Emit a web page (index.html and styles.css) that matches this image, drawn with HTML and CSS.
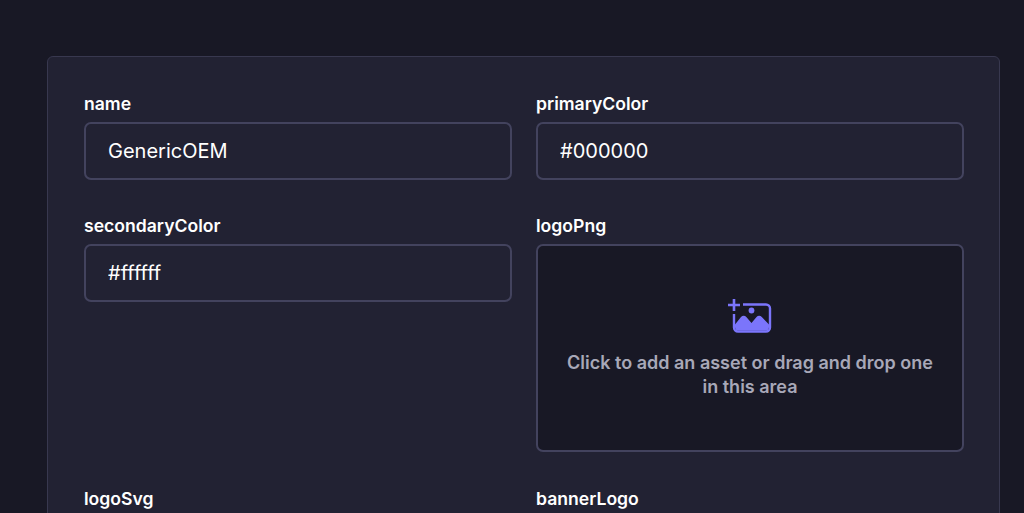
FILE: index.html
```html
<!DOCTYPE html>
<html lang="en">
<head>
    <meta charset="UTF-8">
    <title>Branding</title>
    <link rel="stylesheet" href="styles.css">
</head>
<body>
    <div class="card">
        <div class="field">
            <label class="field-label">name</label>
            <input class="text-input" type="text" value="GenericOEM">
        </div>
        <div class="field">
            <label class="field-label">primaryColor</label>
            <input class="text-input" type="text" value="#000000">
        </div>
        <div class="field">
            <label class="field-label">secondaryColor</label>
            <input class="text-input" type="text" value="#ffffff">
        </div>
        <div class="field">
            <label class="field-label">logoPng</label>
            <div class="dropzone">
                <svg class="dropzone-icon" width="44" height="36" viewBox="0 0 44 36">
                    <path d="M0 8h12M6 2v12" stroke="#7b75fb" stroke-width="2.6" fill="none"/>
                    <path d="M15 7.500h23a4 4 0 0 1 4 4v19a4 4 0 0 1-4 4H10a4 4 0 0 1-4-4V17" stroke="#7b75fb" stroke-width="2.4" fill="none"/>
                    <circle cx="23.500" cy="13.500" r="2.900" fill="#7b75fb"/>
                    <path d="M7 30V27.500L13 20c1.500-1.800 3.800-1.800 5.300 0l5.200 6 5-6c1.500-1.800 3.800-1.800 5.300 0L41 27.500V30a3.500 3.500 0 0 1-3.500 3.500H10.500A3.500 3.500 0 0 1 7 30z" fill="#7b75fb"/>
                </svg>
                <p class="dropzone-text">Click to add an asset or drag and drop one in this area</p>
            </div>
        </div>
        <div class="field field-next">
            <label class="field-label">logoSvg</label>
        </div>
        <div class="field field-next">
            <label class="field-label">bannerLogo</label>
        </div>
    </div>
</body>
</html>
```

FILE: styles.css
```css
* {
    margin: 0;
    padding: 0;
    box-sizing: border-box;
}
html, body {
    height: 513px;
    overflow: hidden;
}
body {
    font-family: Inter, "Liberation Sans", sans-serif;
    background: #181825;
    color: white;
    padding: 56px 24px 0 47px;
}
.card {
    width: 953px;
    background: #222233;
    border: 1px solid #38384f;
    border-radius: 6px;
    padding: 35px 36px;
    display: grid;
    grid-template-columns: 428px 428px;
    column-gap: 24px;
    row-gap: 34px;
    align-items: start;
}
.field {
    display: flex;
    flex-direction: column;
    gap: 6px;
}
.field-next {
    margin-top: 1px;
}
.field-label {
    font-size: 17.6px;
    font-weight: 600;
    line-height: 24px;
}
.text-input {
    height: 58px;
    width: 100%;
    padding: 0 22px;
    background: #222233;
    border: 2px solid #43435e;
    border-radius: 7px;
    color: white;
    font-family: inherit;
    font-size: 20px;
    outline: none;
}
.dropzone {
    height: 208px;
    background: #181825;
    border: 2px solid #43435e;
    border-radius: 7px;
    display: flex;
    flex-direction: column;
    align-items: center;
    padding: 51px 22px 0;
    gap: 18px;
}
.dropzone-text {
    font-size: 18px;
    font-weight: 600;
    line-height: 24px;
    color: #a8a8b8;
    text-align: center;
    max-width: 370px;
}
```
